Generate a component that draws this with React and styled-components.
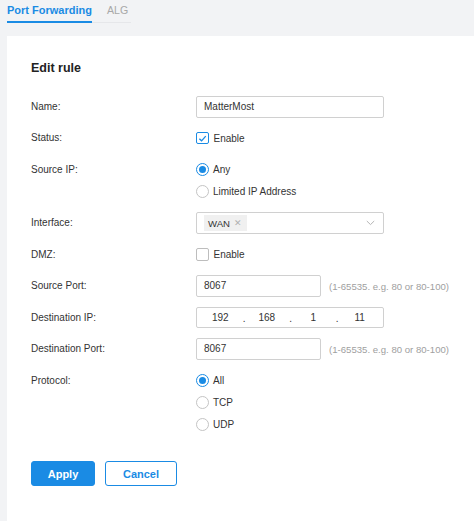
import React from "react";
import styled, { createGlobalStyle } from "styled-components";

const Global = createGlobalStyle`
  html, body { margin: 0; padding: 0; background: #f2f3f5; }
  body { font-family: "Liberation Sans", Arial, sans-serif; color: #333; }
  * { box-sizing: border-box; }
`;

const BLUE = "#1a8be4";

const Page = styled.div`
  width: 474px;
  height: 521px;
  background: #f2f3f5;
  display: flex;
  flex-direction: column;
  overflow: hidden;
`;

const TabBar = styled.div`
  display: flex;
  align-items: flex-end;
  gap: 15px;
  height: 23px;
  margin-left: 7px;
  width: 124px;
  border-bottom: 1px solid #e6e7ea;
`;

const Tab = styled.div`
  font-size: ${(p) => (p.$active ? "11px" : "10.6px")};
  font-weight: ${(p) => (p.$active ? 700 : 400)};
  color: ${(p) => (p.$active ? BLUE : "#a8a8a8")};
  height: 23px;
  line-height: 18px;
  padding-top: 1px;
  margin-bottom: -1px;
  border-bottom: 2.5px solid ${(p) => (p.$active ? BLUE : "transparent")};
  white-space: nowrap;
`;

const Card = styled.div`
  margin-top: 13px;
  margin-left: 7px;
  flex: 1;
  background: #fff;
  padding: 25px 0 0 24px;
`;

const Title = styled.div`
  font-size: 12.5px;
  font-weight: 700;
  color: #222;
  line-height: 15px;
  margin-bottom: 19.5px;
`;

const Form = styled.div`
  display: flex;
  flex-direction: column;
  gap: 9.5px;
`;

const Row = styled.div`
  display: grid;
  grid-template-columns: 165px 1fr;
  align-items: start;
`;

const Label = styled.div`
  font-size: 10px;
  line-height: 22px;
  color: #333;
`;

const Control = styled.div`
  display: flex;
  flex-direction: ${(p) => (p.$column ? "column" : "row")};
  align-items: ${(p) => (p.$column ? "flex-start" : "center")};
  min-height: 22px;
`;

const Input = styled.div`
  width: ${(p) => p.$w || 188}px;
  height: 22px;
  border: 1px solid #d0d0d0;
  border-radius: 2px;
  padding: 0 7px;
  font-size: 10px;
  line-height: 20px;
  color: #333;
  background: #fff;
`;

const Hint = styled.span`
  font-size: 9.6px;
  color: #a0a0a0;
  margin-left: 8px;
  white-space: nowrap;
`;

const Option = styled.label`
  display: flex;
  align-items: center;
  height: 22px;
  font-size: 10px;
  color: #333;
  gap: ${(p) => p.$gap || 5}px;
`;

const Box = styled.span`
  width: 12.5px;
  height: 12.5px;
  border: 1px solid ${(p) => (p.$on ? BLUE : "#bdbdbd")};
  border-radius: 2px;
  display: inline-flex;
  align-items: center;
  justify-content: center;
  background: #fff;
`;

const Radio = styled.span`
  width: 13px;
  height: 13px;
  border-radius: 50%;
  border: 1px solid ${(p) => (p.$on ? BLUE : "#c4c4c4")};
  display: inline-flex;
  align-items: center;
  justify-content: center;
  background: #fff;
  &::after {
    content: "";
    width: 7px;
    height: 7px;
    border-radius: 50%;
    background: ${(p) => (p.$on ? BLUE : "transparent")};
  }
`;

const Select = styled.div`
  width: 188px;
  height: 22px;
  border: 1px solid #d0d0d0;
  border-radius: 2px;
  display: flex;
  align-items: center;
  justify-content: space-between;
  padding: 0 8px 0 7px;
`;

const TagChip = styled.span`
  display: inline-flex;
  align-items: center;
  gap: 4px;
  height: 16px;
  padding: 0 5px 0 4px;
  background: #f0f0f0;
  font-size: 9.6px;
  color: #333;
`;

const TagX = styled.span`
  font-size: 9px;
  color: #b0b0b0;
`;

const IpBox = styled.div`
  width: 188px;
  height: 21px;
  border: 1px solid #d0d0d0;
  border-radius: 2px;
  display: grid;
  grid-template-columns: repeat(4, 1fr);
  font-size: 10px;
  color: #333;
`;

const IpSeg = styled.div`
  position: relative;
  text-align: center;
  line-height: 19px;
`;

const IpDot = styled.span`
  position: absolute;
  right: -2px;
  top: 1px;
  font-size: 10px;
`;

const Buttons = styled.div`
  display: flex;
  gap: 10px;
  margin-top: 25.5px;
`;

const Button = styled.button`
  height: 25px;
  width: ${(p) => p.$w}px;
  border-radius: 3px;
  border: 1px solid ${BLUE};
  background: ${(p) => (p.$primary ? BLUE : "#fff")};
  color: ${(p) => (p.$primary ? "#fff" : BLUE)};
  font-family: "Liberation Sans", Arial, sans-serif;
  font-size: 11px;
  font-weight: 700;
  padding: 0;
`;

const Check = () => (
  <svg width="9" height="9" viewBox="0 0 10 10">
    <path d="M1.5 5.2 L4 7.6 L8.6 2.4" fill="none" stroke={BLUE} strokeWidth="1.5" />
  </svg>
);

const Chevron = () => (
  <svg width="9" height="6" viewBox="0 0 9 6">
    <path d="M0.8 1 L4.5 4.6 L8.2 1" fill="none" stroke="#b5b5b5" strokeWidth="1" />
  </svg>
);

export default function App() {
  return (
    <Page>
      <Global />
      <TabBar>
        <Tab $active>Port Forwarding</Tab>
        <Tab>ALG</Tab>
      </TabBar>
      <Card>
        <Title>Edit rule</Title>
        <Form>
          <Row>
            <Label>Name:</Label>
            <Control>
              <Input>MatterMost</Input>
            </Control>
          </Row>
          <Row>
            <Label>Status:</Label>
            <Control>
              <Option>
                <Box $on><Check /></Box>Enable
              </Option>
            </Control>
          </Row>
          <Row>
            <Label>Source IP:</Label>
            <Control $column>
              <Option $gap={4}><Radio $on />Any</Option>
              <Option $gap={4}><Radio />Limited IP Address</Option>
            </Control>
          </Row>
          <Row>
            <Label>Interface:</Label>
            <Control>
              <Select>
                <TagChip>WAN<TagX>✕</TagX></TagChip>
                <Chevron />
              </Select>
            </Control>
          </Row>
          <Row>
            <Label>DMZ:</Label>
            <Control>
              <Option><Box />Enable</Option>
            </Control>
          </Row>
          <Row>
            <Label>Source Port:</Label>
            <Control>
              <Input $w={125}>8067</Input>
              <Hint>(1-65535. e.g. 80 or 80-100)</Hint>
            </Control>
          </Row>
          <Row>
            <Label>Destination IP:</Label>
            <Control>
              <IpBox>
                <IpSeg>192<IpDot>.</IpDot></IpSeg>
                <IpSeg>168<IpDot>.</IpDot></IpSeg>
                <IpSeg>1<IpDot>.</IpDot></IpSeg>
                <IpSeg>11</IpSeg>
              </IpBox>
            </Control>
          </Row>
          <Row>
            <Label>Destination Port:</Label>
            <Control>
              <Input $w={125}>8067</Input>
              <Hint>(1-65535. e.g. 80 or 80-100)</Hint>
            </Control>
          </Row>
          <Row>
            <Label>Protocol:</Label>
            <Control $column>
              <Option $gap={4}><Radio $on />All</Option>
              <Option $gap={4}><Radio />TCP</Option>
              <Option $gap={4}><Radio />UDP</Option>
            </Control>
          </Row>
        </Form>
        <Buttons>
          <Button $primary $w={64}>Apply</Button>
          <Button $w={72}>Cancel</Button>
        </Buttons>
      </Card>
    </Page>
  );
}
